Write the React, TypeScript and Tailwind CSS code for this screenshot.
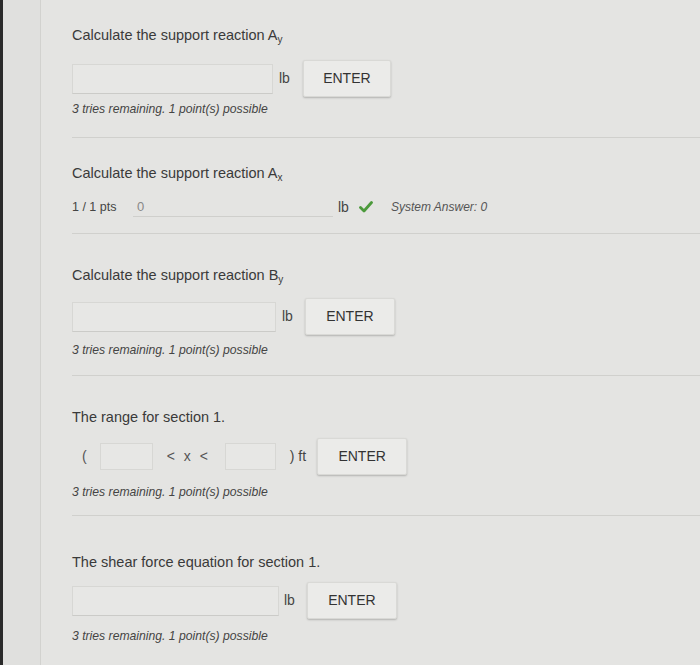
import React from 'react';

const font = { fontFamily: '"Liberation Sans", Arial, sans-serif' };

function Title({ text, sub, className = '' }: { text: string; sub?: string; className?: string }) {
  return (
    <div className={`h-[18px] text-[14.5px] leading-[18px] text-[#3a3a3a] ${className}`}>
      {text}
      {sub && <span className="relative top-[3px] text-[10px]">{sub}</span>}
    </div>
  );
}

function Tries({ className = '' }: { className?: string }) {
  return (
    <div className={`h-4 text-[12.2px] leading-4 italic text-[#444] ${className}`}>
      3 tries remaining. 1 point(s) possible
    </div>
  );
}

function EnterButton({ className = '' }: { className?: string }) {
  return (
    <button className={`h-[37px] w-[88px] rounded-[2px] border border-[#d9d9d6] bg-[#ebebe9] text-[14px] text-[#333] shadow-[0_1px_2px_rgba(0,0,0,0.22)] ${className}`}>
      ENTER
    </button>
  );
}

function Box({ w }: { w: string }) {
  return <div className={`h-[30px] ${w} border border-[#d7d7d4] border-b-[#cbcbc8] bg-[#e7e7e5]`} />;
}

function Divider({ className = '' }: { className?: string }) {
  return <div className={`h-px w-full shrink-0 bg-[#d0d0cd] ${className}`} />;
}

export default function App() {
  return (
    <div className="flex h-[665px] w-[700px] overflow-hidden bg-[#e4e4e2]" style={font}>
      {/* left edge of the screen */}
      <div className="flex w-[41px] shrink-0">
        <div className="w-[3px] bg-[#2a2a2a]" />
        <div className="flex-1 border-r border-[#d2d2cf] bg-[#e0e0de]" />
      </div>

      <div className="flex flex-1 flex-col pl-[31px] pt-[26px]">
        {/* Ay */}
        <Title text="Calculate the support reaction A" sub="y" />
        <div className="mt-[16px] flex items-center">
          <Box w="w-[201px]" />
          <span className="ml-[6px] text-[14px] text-[#444]">lb</span>
          <EnterButton className="ml-[13px]" />
        </div>
        <Tries className="mt-[4px]" />
        <Divider className="mt-[20px]" />

        {/* Ax */}
        <Title text="Calculate the support reaction A" sub="x" className="mt-[26px]" />
        <div className="mt-[15px] flex h-[20px] items-center">
          <span className="w-[61px] text-[12.5px] text-[#444]">1 / 1 pts</span>
          <div className="flex h-[20px] w-[200px] items-center border-b border-[#cfcfcc] pl-[4px] text-[13px] text-[#888]">0</div>
          <span className="ml-[5px] text-[14px] text-[#444]">lb</span>
          <svg className="ml-[10px]" width="14" height="12" viewBox="0 0 14 12">
            <path d="M1.5 6.5 L5 10 L12.5 1.5" fill="none" stroke="#4c9a3c" strokeWidth="2.8" strokeLinecap="round" strokeLinejoin="round" />
          </svg>
          <span className="ml-[18px] text-[12px] italic text-[#555]">System Answer: 0</span>
        </div>
        <Divider className="mt-[16px]" />

        {/* By */}
        <Title text="Calculate the support reaction B" sub="y" className="mt-[32px]" />
        <div className="mt-[14px] flex items-center">
          <Box w="w-[204px]" />
          <span className="ml-[6px] text-[14px] text-[#444]">lb</span>
          <EnterButton className="ml-[12px] w-[90px]" />
        </div>
        <Tries className="mt-[7px]" />
        <Divider className="mt-[17px]" />

        {/* range */}
        <Title text="The range for section 1." className="mt-[32px]" />
        <div className="mt-[12px] flex h-[38px] items-center">
          <span className="ml-[10px] text-[14px] text-[#555]">(</span>
          <div className="ml-[13px] h-[27px] w-[53px] border border-[#d7d7d4] bg-[#e7e7e5]" />
          <span className="ml-[14px] text-[14px] text-[#555] [word-spacing:5px]">&lt; x &lt;</span>
          <div className="ml-[17px] h-[27px] w-[51px] border border-[#d7d7d4] bg-[#e7e7e5]" />
          <span className="ml-[14px] text-[14px] text-[#444]">) ft</span>
          <EnterButton className="ml-[11px] w-[90px]" />
        </div>
        <Tries className="mt-[9px]" />
        <Divider className="mt-[15px]" />

        {/* shear */}
        <Title text="The shear force equation for section 1." className="mt-[37px]" />
        <div className="mt-[11px] flex items-center">
          <Box w="w-[207px]" />
          <span className="ml-[5px] text-[14px] text-[#444]">lb</span>
          <EnterButton className="ml-[12px] w-[90px]" />
        </div>
        <Tries className="mt-[9px]" />
        <Divider className="mt-[22px]" />
      </div>
    </div>
  );
}
